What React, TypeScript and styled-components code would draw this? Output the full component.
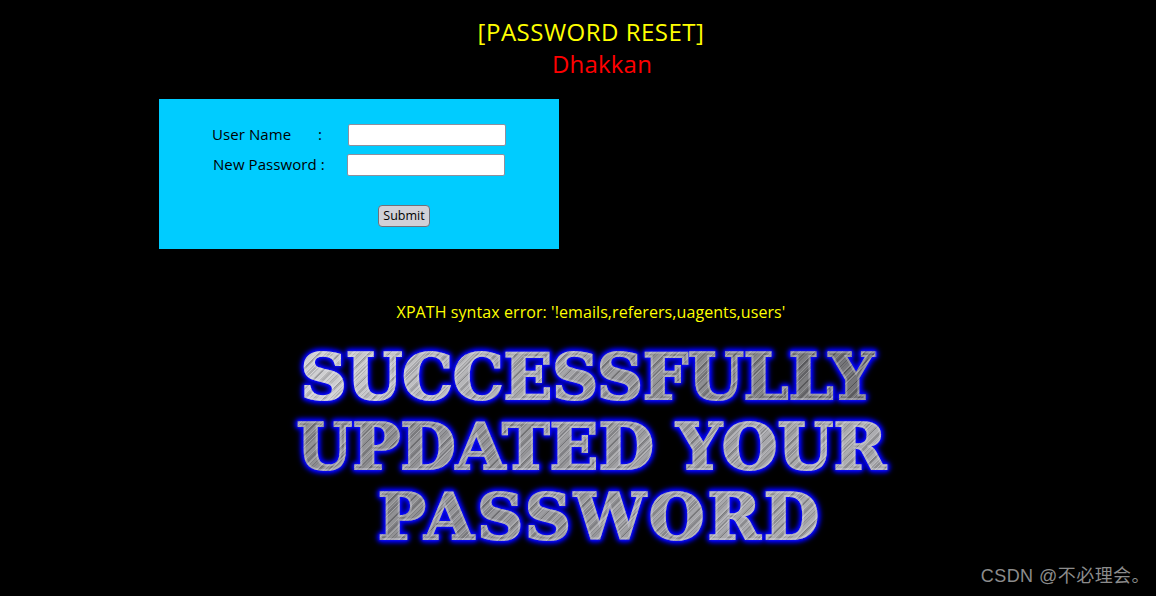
import styled, { createGlobalStyle } from "styled-components"

const GlobalStyle = createGlobalStyle`
  html, body {
    margin: 0;
    padding: 0;
    background: #000;
    height: 100%;
  }
  body {
    font-family: "Open Sans", "Noto Sans", sans-serif;
    overflow: hidden;
  }
`

const Page = styled.div`
  position: relative;
  width: 1156px;
  height: 596px;
  background: #000;
  overflow: hidden;
`

const Header = styled.header`
  padding-top: 16px;
  display: flex;
  flex-direction: column;
  align-items: center;
  font-size: 24px;
  line-height: 32px;
`

const Title = styled.div`
  color: #ff0;
  margin-left: 26px;
  letter-spacing: 0.5px;
`

const Author = styled.div`
  color: #f00;
  margin-left: 48px;
  letter-spacing: 0.2px;
`

const FormBox = styled.form`
  margin: 19px 0 0 159px;
  width: 400px;
  height: 150px;
  box-sizing: border-box;
  padding-top: 25px;
  background: #00ccff;
  display: flex;
  flex-direction: column;
`

const Row = styled.div<{ $left: number; $gap: number }>`
  display: flex;
  align-items: center;
  gap: ${(p) => p.$gap}px;
  height: 22px;
  margin-bottom: 8px;
  padding-left: ${(p) => p.$left}px;
`

const Label = styled.label<{ $width: number }>`
  width: ${(p) => p.$width}px;
  display: flex;
  justify-content: space-between;
  margin-top: -2px;
  font-size: 15px;
  letter-spacing: 0.08px;
  color: #000;
  white-space: nowrap;
`

const TextInput = styled.input`
  width: 158px;
  height: 22px;
  box-sizing: border-box;
  padding: 1px 2px;
  background: #fff;
  border: 1px solid #8f8f9d;
  border-radius: 2px;
`

const SubmitRow = styled.div`
  margin-top: 19px;
  padding-left: 219px;
`

const SubmitButton = styled.button`
  width: 52px;
  height: 22px;
  padding: 0;
  box-sizing: border-box;
  font-family: "Open Sans", sans-serif;
  font-size: 12.5px;
  color: #000;
  background: #d0d0d7;
  border: 1px solid #70707a;
  border-radius: 4px;
`

const ErrorLine = styled.p`
  margin: 52px 0 0;
  padding-left: 26px;
  text-align: center;
  color: #ff0;
  font-size: 16px;
  line-height: 22px;
  letter-spacing: 0.08px;
`

const Banner = styled.div`
  margin-top: 19px;
  display: flex;
  flex-direction: column;
  align-items: center;
  font-family: "DejaVu Serif", "Liberation Serif", serif;
  font-weight: 700;
  font-size: 64px;
  line-height: 70px;
  filter: drop-shadow(0 0 1px #1a1aff) drop-shadow(0 0 2px #0000f5) drop-shadow(0 0 2px #0000f0)
    drop-shadow(0 0 2px #0000b0);
`

const BannerLine = styled.div<{ $left: number; $spacing: number; $from: string; $to: string }>`
  width: fit-content;
  margin-left: ${(p) => p.$left}px;
  white-space: nowrap;
  color: transparent;
  letter-spacing: ${(p) => p.$spacing}px;
  background-image:
    repeating-linear-gradient(135deg, rgba(255, 255, 255, 0.16) 0 1px, rgba(0, 0, 0, 0.1) 1px 2px, rgba(255, 255, 255, 0) 2px 5px),
    repeating-linear-gradient(135deg, rgba(0, 0, 0, 0.14) 0 2px, rgba(255, 255, 255, 0.08) 2px 7px),
    linear-gradient(90deg, ${(p) => p.$from}, ${(p) => p.$to});
  -webkit-background-clip: text;
  background-clip: text;
  -webkit-text-stroke: 2px rgba(225, 225, 240, 0.35);
`

const Watermark = styled.div`
  position: absolute;
  right: 6px;
  bottom: 7px;
  color: #8c8c8c;
  font-family: "Liberation Sans", "Noto Sans CJK SC", sans-serif;
  font-size: 18px;
  line-height: 26px;
  letter-spacing: 0.45px;
`

export default function App() {
  return (
    <Page>
      <GlobalStyle />
      <Header>
        <Title>[PASSWORD RESET]</Title>
        <Author>Dhakkan</Author>
      </Header>
      <FormBox>
        <Row $left={53} $gap={26}>
          <Label $width={110}>
            <span>User Name</span>
            <span>:</span>
          </Label>
          <TextInput type="text" name="uname" />
        </Row>
        <Row $left={54} $gap={22}>
          <Label $width={112}>
            <span>New Password :</span>
          </Label>
          <TextInput type="text" name="passwd" />
        </Row>
        <SubmitRow>
          <SubmitButton type="button">Submit</SubmitButton>
        </SubmitRow>
      </FormBox>
      <ErrorLine>XPATH syntax error: '!emails,referers,uagents,users'</ErrorLine>
      <Banner>
        <BannerLine $left={19} $spacing={-0.2} $from="#cfcfd2" $to="#66666a">SUCCESSFULLY</BannerLine>
        <BannerLine $left={27} $spacing={0} $from="#88888c" $to="#a8a8ac">UPDATED YOUR</BannerLine>
        <BannerLine $left={44} $spacing={3} $from="#88888c" $to="#a8a8ac">PASSWORD</BannerLine>
      </Banner>
      <Watermark>CSDN @不必理会。</Watermark>
    </Page>
  )
}
